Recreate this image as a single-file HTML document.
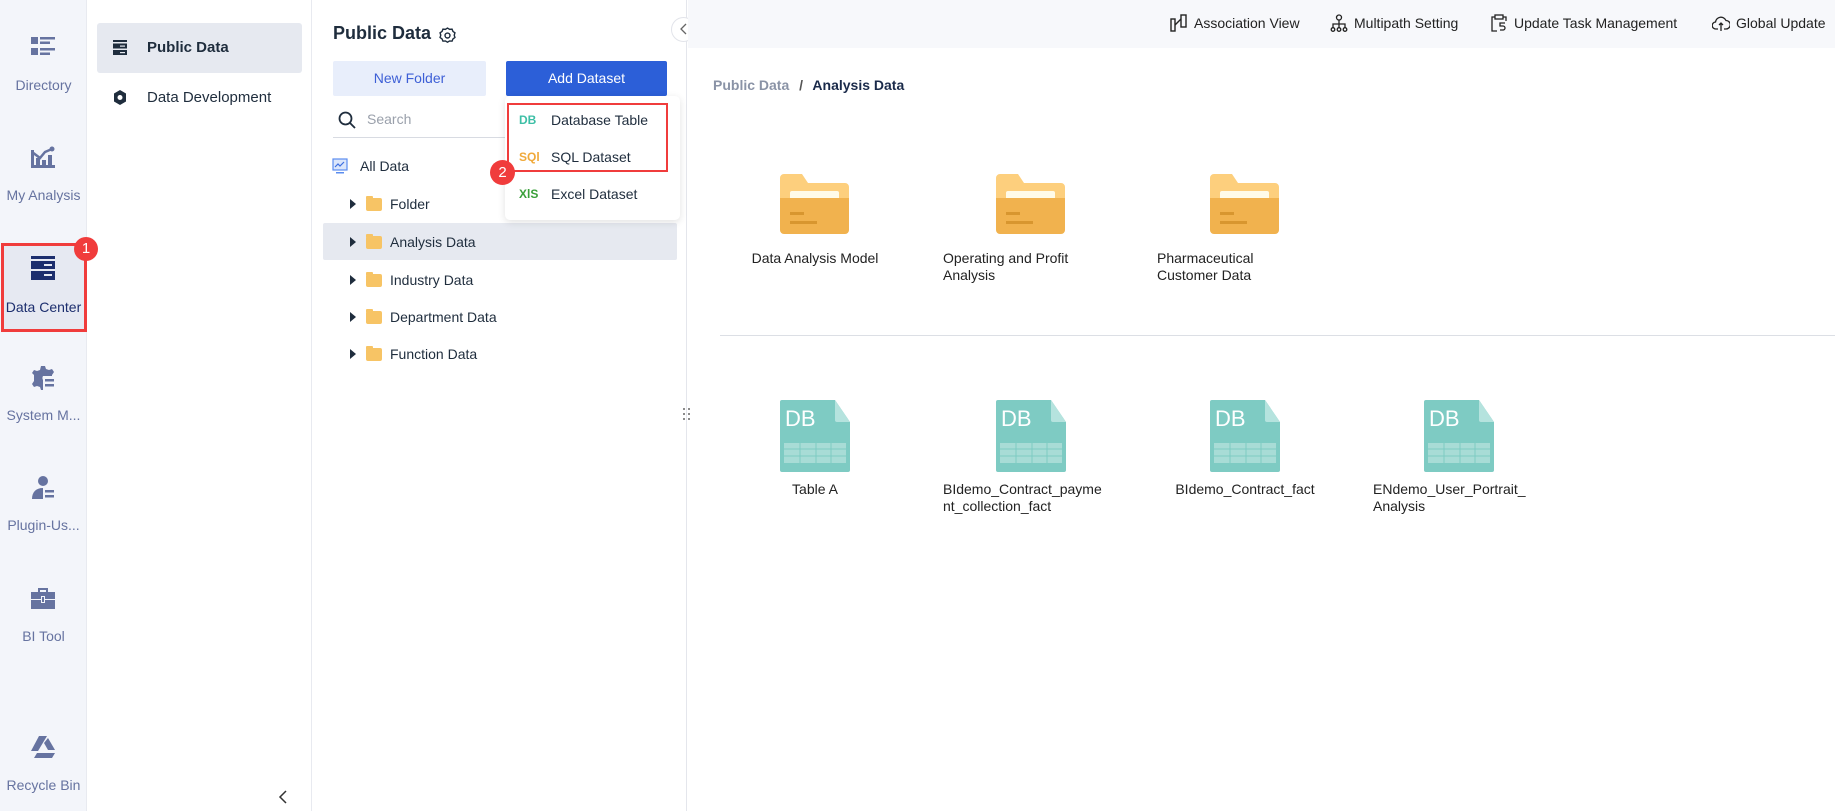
<!DOCTYPE html>
<html><head><meta charset="utf-8"><style>
*{box-sizing:border-box;margin:0;padding:0}
body{width:1835px;height:811px;overflow:hidden;background:#fff;font-family:"Liberation Sans",Arial,sans-serif;color:#1f2d3d;position:relative;font-size:14px}
.a{position:absolute}
.rail{left:0;top:0;width:87px;height:811px;background:#f3f5fa;border-right:1px solid #e8eaf0}
.ri{position:absolute;left:0;width:87px;text-align:center;color:#6673a0;font-size:14px;white-space:nowrap}
.p2{left:87px;top:0;width:225px;height:811px;background:#fff;border-right:1px solid #e8eaf0}
.p3{left:312px;top:0;width:375px;height:811px;background:#fff;border-right:1px solid #e4e6ec}
.top{left:688px;top:0;width:1147px;height:48px;background:#f7f8fb}
.tb{position:absolute;top:14px;font-size:14px;color:#222;white-space:nowrap;display:flex;align-items:center;gap:6px}
.tr{position:absolute;left:350px;font-size:14px;color:#1f2d3d;display:flex;align-items:center}
.tri{width:0;height:0;border-top:5px solid transparent;border-bottom:5px solid transparent;border-left:6px solid #1f2d3d;margin-right:10px}
.fi{width:16px;height:13px;background:#f7c465;border-radius:2px;margin-right:8px;position:relative}
.fi:before{content:"";position:absolute;left:0;top:-2px;width:7px;height:3px;background:#f7c465;border-radius:1px 1px 0 0}
.lbl{position:absolute;width:200px;text-align:center;font-size:14px;color:#222;line-height:17px}
.lbl span{display:inline-block;text-align:left;white-space:nowrap}
</style></head><body>
<div class="a rail"></div>
<svg class="a" style="left:31px;top:37px" width="24" height="20" viewBox="0 0 24 20" fill="#6673a0"><rect x="0" y="0" width="7" height="7"/><rect x="9" y="0" width="15" height="2.5"/><rect x="9" y="4.5" width="10" height="2.5"/><rect x="0" y="11" width="7" height="7"/><rect x="9" y="11" width="15" height="2.5"/><rect x="9" y="15.5" width="10" height="2.5"/></svg>
<div class="ri" style="top:77px">Directory</div>
<svg class="a" style="left:31px;top:146px" width="24" height="22" viewBox="0 0 24 22" fill="#6673a0"><rect x="0" y="4" width="3" height="16"/><rect x="5" y="12" width="4" height="7"/><rect x="11" y="14" width="4" height="5"/><rect x="17" y="9" width="4" height="10"/><rect x="0" y="19" width="24" height="3"/><path d="M1 6 L9 12 L14 6 L21 3" stroke="#6673a0" stroke-width="2.5" fill="none"/><circle cx="21" cy="3" r="2.5"/></svg>
<div class="ri" style="top:187px">My Analysis</div>
<div class="a" style="left:1px;top:243px;width:86px;height:89px;background:#e6e9f2;border:3px solid #f03c3c"></div>
<svg class="a" style="left:31px;top:256px" width="24" height="24" viewBox="0 0 24 24" fill="#1c2e6e"><rect x="0" y="0" width="24" height="3"/><rect x="0" y="5" width="24" height="8"/><rect x="0" y="15" width="24" height="9"/><rect x="13" y="8" width="8" height="2" fill="#e6e9f2"/><rect x="13" y="18" width="8" height="2" fill="#e6e9f2"/></svg>
<div class="ri" style="top:299px;color:#1c2e6e">Data Center</div>
<svg class="a" style="left:31px;top:366px" width="24" height="24" viewBox="0 0 24 24" fill="#6673a0"><path d="M10 0h4l1 3 3 1 3-1 2 3-2 3v1H12a4 4 0 0 0 0 4v10h-2l-1-3-3-1-3 1-2-3 2-3V9L1 7l2-3 3 1 3-1z"/><rect x="14" y="13" width="9" height="2.5"/><rect x="14" y="18" width="9" height="2.5"/></svg>
<div class="ri" style="top:407px">System M...</div>
<svg class="a" style="left:31px;top:475px" width="24" height="24" viewBox="0 0 24 24" fill="#6673a0"><circle cx="12" cy="6" r="5"/><path d="M1 24c0-7 4-11 11-11v11z"/><rect x="14" y="15" width="9" height="2.5"/><rect x="14" y="20" width="9" height="2.5"/></svg>
<div class="ri" style="top:517px">Plugin-Us...</div>
<svg class="a" style="left:31px;top:586px" width="24" height="24" viewBox="0 0 24 24" fill="#6673a0"><path d="M7 2h10v4h-2V4H9v2H7z"/><rect x="0" y="6" width="24" height="7"/><rect x="0" y="14" width="24" height="9"/><rect x="10" y="10" width="4" height="7" fill="#f3f5fa"/><rect x="11" y="11" width="2" height="5"/></svg>
<div class="ri" style="top:628px">BI Tool</div>
<svg class="a" style="left:31px;top:736px" width="24" height="22" viewBox="0 0 24 22" fill="#6673a0"><path d="M8 0h8l-9 15H0z" /><path d="M17 2l7 12h-7l-4-7z"/><path d="M6 17h18l-3 5H3z"/></svg>
<div class="ri" style="top:777px">Recycle Bin</div>

<div class="a p2"></div>
<div class="a" style="left:74px;top:237px;width:24px;height:24px;border-radius:50%;background:#f03c3c;color:#fff;text-align:center;line-height:24px;font-size:15px">1</div>
<div class="a" style="left:97px;top:23px;width:205px;height:50px;background:#e6e9f0;border-radius:3px"></div>
<svg class="a" style="left:113px;top:40px" width="14" height="15" viewBox="0 0 14 15" fill="#1f2d3d"><rect x="0" y="0" width="14" height="2"/><rect x="0" y="3.5" width="14" height="5"/><rect x="0" y="10" width="14" height="5"/><rect x="7" y="5.5" width="5" height="1.2" fill="#e6e9f0"/><rect x="7" y="12" width="5" height="1.2" fill="#e6e9f0"/></svg>
<div class="a" style="left:147px;top:39px;font-size:15px;font-weight:bold;color:#1f2d3d">Public Data</div>
<svg class="a" style="left:113px;top:90px" width="14" height="15" viewBox="0 0 14 15"><path d="M7 0l6 3.5v8L7 15 1 11.5v-8z" fill="#1f2d3d"/><circle cx="7" cy="7.5" r="2.5" fill="#fff"/></svg>
<div class="a" style="left:147px;top:89px;font-size:15px;color:#1f2d3d">Data Development</div>
<svg class="a" style="left:278px;top:790px" width="10" height="14" viewBox="0 0 10 14"><path d="M8 1L2 7l6 6" stroke="#333" stroke-width="1.5" fill="none"/></svg>

<div class="a p3"></div>
<div class="a" style="left:333px;top:23px;font-size:18px;font-weight:bold;color:#1f2d3d">Public Data</div>
<svg class="a" style="left:439px;top:27px" width="17" height="17" viewBox="0 0 24 24"><path d="M12 1.5l3 1.8 3.4-.3 1.3 3.2 2.8 2-1 3.3 1 3.3-2.8 2-1.3 3.2-3.4-.3-3 1.8-3-1.8-3.4.3-1.3-3.2-2.8-2 1-3.3-1-3.3 2.8-2L5.6 3l3.4.3z" fill="none" stroke="#1f2d3d" stroke-width="2"/><circle cx="12" cy="12" r="3.5" fill="none" stroke="#1f2d3d" stroke-width="2"/></svg>
<div class="a" style="left:333px;top:61px;width:153px;height:35px;background:#e8eefb;border-radius:2px;color:#3d5fd6;text-align:center;line-height:35px;font-size:14px">New Folder</div>
<div class="a" style="left:506px;top:61px;width:161px;height:35px;background:#2c5fd8;border-radius:2px;color:#fff;text-align:center;line-height:35px;font-size:14px">Add Dataset</div>
<svg class="a" style="left:338px;top:111px" width="18" height="18" viewBox="0 0 18 18"><circle cx="7.5" cy="7.5" r="6" stroke="#1f2d3d" stroke-width="1.8" fill="none"/><path d="M12 12l5 5" stroke="#1f2d3d" stroke-width="1.8"/></svg>
<div class="a" style="left:367px;top:111px;color:#9aa0ab;font-size:14px">Search</div>
<div class="a" style="left:333px;top:137px;width:175px;height:1px;background:#d8dbe2"></div>
<svg class="a" style="left:332px;top:158px" width="16" height="16" viewBox="0 0 16 16"><rect x="1" y="1" width="14" height="11" fill="#dbe6fb" stroke="#5b8def" stroke-width="1.2"/><path d="M3 9l3-3 2 2 4-4" stroke="#3d6fe0" stroke-width="1.2" fill="none"/><rect x="4" y="14" width="8" height="1.5" fill="#5b8def"/></svg>
<div class="a" style="left:360px;top:158px;font-size:14px;color:#1f2d3d">All Data</div>
<div class="tr" style="top:196px"><div class="tri"></div><div class="fi"></div>Folder</div>
<div class="a" style="left:323px;top:223px;width:354px;height:37px;background:#e6e9f0;border-radius:2px"></div>
<div class="tr" style="top:234px"><div class="tri"></div><div class="fi"></div>Analysis Data</div>
<div class="tr" style="top:272px"><div class="tri"></div><div class="fi"></div>Industry Data</div>
<div class="tr" style="top:309px"><div class="tri"></div><div class="fi"></div>Department Data</div>
<div class="tr" style="top:346px"><div class="tri"></div><div class="fi"></div>Function Data</div>

<div class="a" style="left:505px;top:96px;width:175px;height:124px;background:#fff;border-radius:5px;box-shadow:0 2px 8px rgba(0,0,0,.12)"></div>
<div class="a" style="left:519px;top:113px;font-size:12px;font-weight:bold;color:#3dbfa6">DB</div>
<div class="a" style="left:551px;top:112px;font-size:14px;color:#1f2d3d">Database Table</div>
<div class="a" style="left:519px;top:150px;font-size:12px;font-weight:bold;color:#f0a93a">SQl</div>
<div class="a" style="left:551px;top:149px;font-size:14px;color:#1f2d3d">SQL Dataset</div>
<div class="a" style="left:519px;top:187px;font-size:12px;font-weight:bold;color:#3aa03a">XlS</div>
<div class="a" style="left:551px;top:186px;font-size:14px;color:#1f2d3d">Excel Dataset</div>
<div class="a" style="left:507px;top:103px;width:161px;height:69px;border:2px solid #f03c3c"></div>
<div class="a" style="left:490px;top:160px;width:25px;height:25px;border-radius:50%;background:#f03c3c;color:#fff;text-align:center;line-height:25px;font-size:15px">2</div>

<div class="a" style="left:671px;top:17px;width:25px;height:25px;border-radius:50%;background:#fff;border:1px solid #e2e4ea"></div>
<svg class="a" style="left:679px;top:22px" width="10" height="14" viewBox="0 0 10 14"><path d="M7 2L2 7l5 5" stroke="#666" stroke-width="1.3" fill="none"/></svg>
<svg class="a" style="left:682px;top:407px" width="10" height="18" viewBox="0 0 10 18" fill="#666"><circle cx="2" cy="2" r="1"/><circle cx="7" cy="2" r="1"/><circle cx="2" cy="7" r="1"/><circle cx="7" cy="7" r="1"/><circle cx="2" cy="12" r="1"/><circle cx="7" cy="12" r="1"/></svg>

<div class="a top"></div>
<div class="tb" style="left:1170px"><svg width="18" height="18" viewBox="0 0 18 18" fill="none" stroke="#222" stroke-width="1.4"><rect x="1" y="5" width="4" height="12"/><rect x="11" y="1" width="5" height="12"/><path d="M5 11L11 5"/></svg>Association View</div>
<div class="tb" style="left:1330px"><svg width="18" height="18" viewBox="0 0 18 18" fill="none" stroke="#222" stroke-width="1.3"><circle cx="9" cy="3.5" r="2.5"/><path d="M9 6v4M3 14v-4h12v4M9 10v4"/><circle cx="3" cy="15.5" r="1.8"/><circle cx="9" cy="15.5" r="1.8"/><circle cx="15" cy="15.5" r="1.8"/></svg>Multipath Setting</div>
<div class="tb" style="left:1490px"><svg width="18" height="18" viewBox="0 0 18 18" fill="none" stroke="#222" stroke-width="1.3"><path d="M5 3H2v14h5M13 3h3v4"/><rect x="5" y="1" width="8" height="4"/><path d="M15 9h-5v3h3a2 2 0 0 1 0 4h-3"/></svg>Update Task Management</div>
<div class="tb" style="left:1712px"><svg width="18" height="18" viewBox="0 0 18 18" fill="none" stroke="#222" stroke-width="1.3"><path d="M6 15H4a3.5 3.5 0 0 1-.5-7A5.5 5.5 0 0 1 14 6.5 4 4 0 0 1 14 15h-2"/><path d="M7 11l2-2 2 2M9 9v8"/></svg>Global Update</div>

<div class="a" style="left:713px;top:77px;font-size:14px;font-weight:bold;color:#8a93a6">Public Data <span style="margin:0 6px;color:#555">/</span> <span style="color:#1a2a4a">Analysis Data</span></div>

<svg width="0" height="0" style="position:absolute"><defs>
<g id="fold"><path d="M0 4a4 4 0 0 1 4-4h18l6 9h37a4 4 0 0 1 4 4v42a4 4 0 0 1-4 4H4a4 4 0 0 1-4-4z" fill="#fdcf7d"/><rect x="10" y="17" width="49" height="9" rx="2" fill="#fffbe8"/><path d="M0 24h69v32a4 4 0 0 1-4 4H4a4 4 0 0 1-4-4z" fill="#f1b24e"/><rect x="10" y="38" width="14" height="3" fill="#d8962f"/><rect x="10" y="47" width="27" height="3" fill="#d8962f"/></g>
<g id="db"><path d="M2 0h53l15 22v48a2 2 0 0 1-2 2H2a2 2 0 0 1-2-2V2a2 2 0 0 1 2-2z" fill="#7ecbc3"/><path d="M55 0v20a2 2 0 0 0 2 2h13z" fill="#b5e3de"/><text x="5" y="26" font-family="Liberation Sans,Arial,sans-serif" font-size="22" fill="#fff">DB</text><rect x="4" y="43" width="62" height="20" fill="#a8dcd6"/><path d="M4 49h62M4 56h62M20 43v20M36 43v20M51 43v20" stroke="#7ecbc3" stroke-width="1"/></g>
</defs></svg>
<svg class="a" style="left:780px;top:174px" width="70" height="62"><use href="#fold"/></svg>
<svg class="a" style="left:996px;top:174px" width="70" height="62"><use href="#fold"/></svg>
<svg class="a" style="left:1210px;top:174px" width="70" height="62"><use href="#fold"/></svg>
<div class="lbl" style="left:715px;top:250px"><span>Data Analysis Model</span></div>
<div class="lbl" style="left:943px;top:250px;text-align:left;width:auto"><span>Operating and Profit<br>Analysis</span></div>
<div class="lbl" style="left:1157px;top:250px;text-align:left;width:auto"><span>Pharmaceutical<br>Customer Data</span></div>
<div class="a" style="left:720px;top:335px;width:1115px;height:1px;background:#dcdfe5"></div>
<svg class="a" style="left:780px;top:400px" width="70" height="72"><use href="#db"/></svg>
<svg class="a" style="left:996px;top:400px" width="70" height="72"><use href="#db"/></svg>
<svg class="a" style="left:1210px;top:400px" width="70" height="72"><use href="#db"/></svg>
<svg class="a" style="left:1424px;top:400px" width="70" height="72"><use href="#db"/></svg>
<div class="lbl" style="left:715px;top:481px"><span>Table A</span></div>
<div class="lbl" style="left:943px;top:481px;text-align:left;width:auto"><span>BIdemo_Contract_payme<br>nt_collection_fact</span></div>
<div class="lbl" style="left:1145px;top:481px"><span>BIdemo_Contract_fact</span></div>
<div class="lbl" style="left:1373px;top:481px;text-align:left;width:auto"><span>ENdemo_User_Portrait_<br>Analysis</span></div>
</body></html>
